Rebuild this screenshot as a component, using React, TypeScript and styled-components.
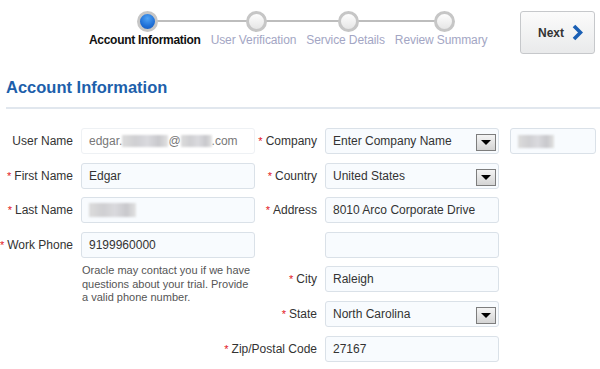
import React from "react";
import styled, { createGlobalStyle } from "styled-components";

const GlobalStyle = createGlobalStyle`
  html, body {
    margin: 0;
    padding: 0;
    background: #fff;
    font-family: "Liberation Sans", Arial, sans-serif;
    color: #333;
  }
`;

const steps = [
  { label: "Account Information", active: true },
  { label: "User Verification", active: false },
  { label: "Service Details", active: false },
  { label: "Review Summary", active: false },
];

const Required = () => <Star>*</Star>;

const Blur: React.FC<{ w: number; h?: number }> = ({ w, h = 12 }) => (
  <Blurred style={{ width: w, height: h }} />
);

const App: React.FC = () => {
  return (
    <Page>
      <GlobalStyle />
      <Header>
        <Stepper>
          <StepLine />
          {steps.map((s) => (
            <Step key={s.label}>
              <Circle $active={s.active} />
              <StepLabel $active={s.active}>{s.label}</StepLabel>
            </Step>
          ))}
        </Stepper>
        <NextButton>
          Next
          <svg width="11" height="17" viewBox="0 0 11 17">
            <path
              d="M2 2 L8.5 8.5 L2 15"
              fill="none"
              stroke="#1a5fb4"
              strokeWidth="3.6"
              strokeLinejoin="miter"
            />
          </svg>
        </NextButton>
      </Header>

      <Title>Account Information</Title>
      <Divider />

      <Form>
        <Label>User Name</Label>
        <Field $readOnly $muted>
          edgar.
          <Blur w={46} />
          @
          <Blur w={31} />
          .com
        </Field>
        <Label $right>
          <Required />
          Company
        </Label>
        <Field>
          Enter Company Name
          <DropButton>
            <Tri />
          </DropButton>
        </Field>
        <Extra>
          <Field>
            <Blur w={36} h={13} />
          </Field>
        </Extra>

        <Label>
          <Required />
          First Name
        </Label>
        <Field>Edgar</Field>
        <Label $right>
          <Required />
          Country
        </Label>
        <Field>
          United States
          <DropButton>
            <Tri />
          </DropButton>
        </Field>

        <Label>
          <Required />
          Last Name
        </Label>
        <Field>
          <Blur w={47} h={14} />
        </Field>
        <Label $right>
          <Required />
          Address
        </Label>
        <Field>8010 Arco Corporate Drive</Field>

        <Label>
          <Required />
          Work Phone
        </Label>
        <Field>9199960000</Field>
        <Label $right />
        <Field />

        <Help>
          Oracle may contact you if we have questions about your trial. Provide
          a valid phone number.
        </Help>
        <Label $right>
          <Required />
          City
        </Label>
        <Field>Raleigh</Field>

        <Label $right>
          <Required />
          State
        </Label>
        <Field>
          North Carolina
          <DropButton>
            <Tri />
          </DropButton>
        </Field>

        <Label $right>
          <Required />
          Zip/Postal Code
        </Label>
        <Field>27167</Field>
      </Form>
    </Page>
  );
};

export default App;

const Page = styled.div`
  width: 600px;
  height: 369px;
  overflow: hidden;
  font-size: 12px;
`;

const Header = styled.div`
  display: flex;
  justify-content: space-between;
  align-items: flex-start;
  padding: 11px 5px 0 89px;
  height: 52px;
`;

const Stepper = styled.div`
  position: relative;
  display: flex;
  gap: 10px;
`;

const StepLine = styled.div`
  position: absolute;
  left: 58px;
  right: 44px;
  top: 9px;
  height: 2px;
  background: #bdbdbd;
`;

const Step = styled.div`
  position: relative;
  display: flex;
  flex-direction: column;
  align-items: center;
`;

const Circle = styled.div<{ $active: boolean }>`
  width: 15px;
  height: 15px;
  border-radius: 50%;
  border: 3px solid #c6c6c6;
  margin-left: 6px;
  background: ${({ $active }) =>
    $active
      ? "radial-gradient(circle at 50% 30%, #4fa3f5 0%, #1f6fd6 60%, #1658b8 100%)"
      : "linear-gradient(#fdfdfd, #e6e6e6)"};
`;

const StepLabel = styled.div<{ $active: boolean }>`
  margin-top: 1px;
  font-size: 12px;
  line-height: 14px;
  white-space: nowrap;
  letter-spacing: ${({ $active }) => ($active ? "-0.3px" : "-0.1px")};
  font-weight: ${({ $active }) => ($active ? "bold" : "normal")};
  color: ${({ $active }) => ($active ? "#111" : "#a3a6c4")};
`;

const NextButton = styled.button`
  width: 75px;
  height: 43px;
  display: flex;
  align-items: center;
  justify-content: center;
  gap: 8px;
  padding: 0 0 0 6px;
  border: 1px solid #c6c8cb;
  border-radius: 3px;
  background: linear-gradient(#fbfbfb, #e9eaeb);
  font-family: "Liberation Sans", Arial, sans-serif;
  font-size: 12px;
  font-weight: bold;
  color: #333;
`;

const Title = styled.h1`
  margin: 0;
  padding: 14px 0 0 6px;
  font-size: 16.5px;
  line-height: 20px;
  font-weight: bold;
  color: #1d5fab;
`;

const Divider = styled.div`
  margin: 10px 0 0 6px;
  height: 2px;
  background: #e1e7ee;
`;

const Form = styled.div`
  display: grid;
  grid-template-columns: 81px 174px 70px 174px 101px;
  grid-auto-rows: 26px;
  row-gap: 8.6px;
  margin-top: 19px;
`;

const Label = styled.div<{ $right?: boolean }>`
  grid-column: ${({ $right }) => ($right ? 3 : 1)};
  display: flex;
  justify-content: flex-end;
  align-items: center;
  padding-right: 8px;
  white-space: nowrap;
  color: #333;
`;

const Star = styled.span`
  color: #e2141b;
  margin-right: 3px;
  font-size: 11px;
`;

const Field = styled.div<{ $readOnly?: boolean; $muted?: boolean }>`
  position: relative;
  display: flex;
  align-items: center;
  box-sizing: border-box;
  height: 26px;
  padding: 0 7px;
  border: 1px solid ${({ $readOnly }) => ($readOnly ? "#eef1f4" : "#dae1e8")};
  border-radius: 3px;
  background: ${({ $readOnly }) => ($readOnly ? "#fff" : "#f8fbfe")};
  color: ${({ $muted }) => ($muted ? "#777" : "#333")};
  white-space: nowrap;
`;

const Extra = styled.div`
  grid-column: 5;
  padding-left: 11px;
  width: 86px;
  box-sizing: content-box;
`;

const DropButton = styled.div`
  position: absolute;
  right: 2px;
  top: 5px;
  width: 18px;
  height: 15px;
  display: flex;
  align-items: center;
  justify-content: center;
  border: 1px solid #7d7d7d;
  background: linear-gradient(#f4f4f4, #d4d4d4);
`;

const Tri = styled.div`
  width: 0;
  height: 0;
  border-left: 5px solid transparent;
  border-right: 5px solid transparent;
  border-top: 5px solid #000;
`;

const Blurred = styled.span`
  display: inline-block;
  background: linear-gradient(
    90deg,
    #dcdcdc 0%,
    #cfcfd2 30%,
    #dadade 55%,
    #c8c8cc 80%,
    #e2e2e2 100%
  );
  filter: blur(1px);
`;

const Help = styled.div`
  grid-column: 2;
  grid-row: 5 / span 3;
  padding: 0 0 0 1px;
  margin-top: -2px;
  font-size: 11px;
  line-height: 13.5px;
  color: #555;
  width: 170px;
`;
